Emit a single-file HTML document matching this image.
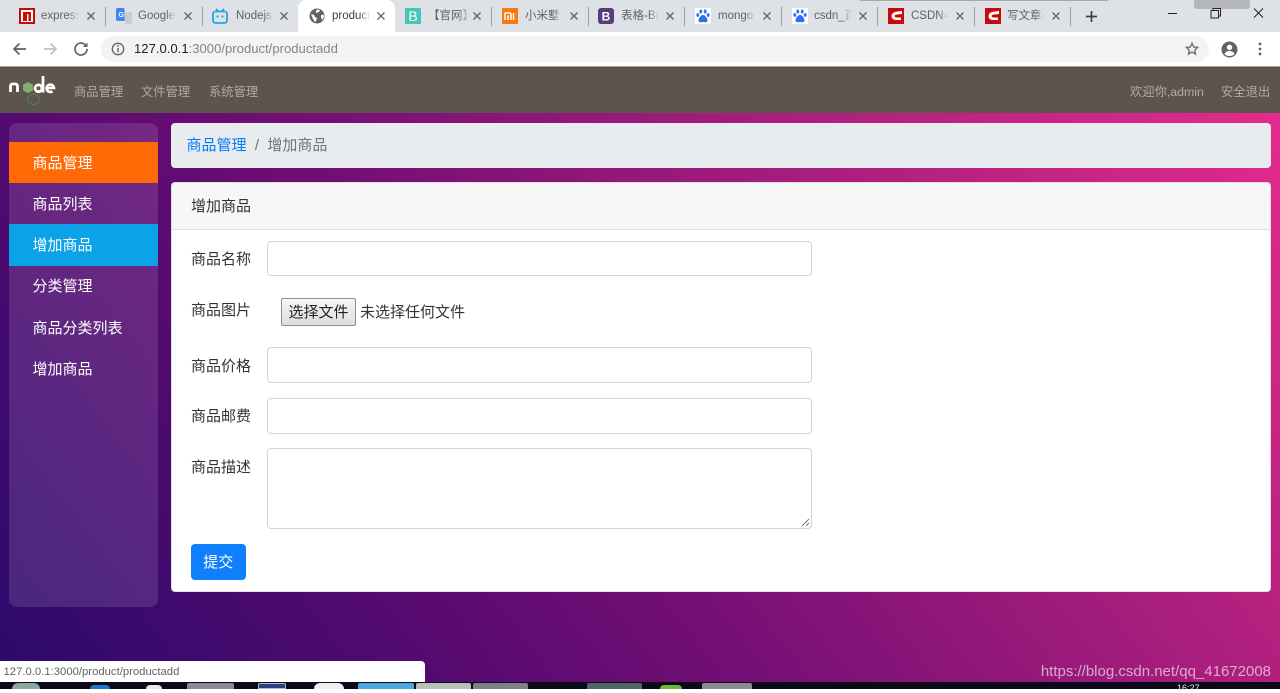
<!DOCTYPE html>
<html lang="zh-CN"><head><meta charset="utf-8"><title>product</title>
<style>
*{box-sizing:border-box}
html,body{margin:0;padding:0}
body{width:1280px;height:689px;overflow:hidden;position:relative;background:#fff;font-family:"Liberation Sans","Noto Sans CJK SC",sans-serif;color:#212529}
.a{position:absolute;white-space:nowrap}
#tabbar{left:0;top:0;width:1280px;height:32px;background:#dee1e6}
.tt{position:absolute;top:8px;font-size:11.5px;line-height:17px;color:#5f6368;width:38px;overflow:hidden;white-space:nowrap;-webkit-mask-image:linear-gradient(90deg,#000 72%,transparent);mask-image:linear-gradient(90deg,#000 72%,transparent)}
.x{position:absolute;top:11px;width:10px;height:10px}
.sep{position:absolute;top:7px;width:1px;height:19px;background:#9a9da3}
.fav{position:absolute;top:8px;width:16px;height:16px}
#bg{left:0;top:113px;width:1280px;height:569px;background:linear-gradient(52deg,#2b0a6c 0%,#540a70 26%,#6f0e74 41%,#b0207e 74%,#e42b8d 100%)}
#nav{left:0;top:66px;width:1280px;height:47px;background:#5d544e;border-top:1px solid #a8a4a0}
.nl{position:absolute;top:84px;font-size:12.3px;line-height:16px;color:rgba(255,255,255,.5)}
#side{left:9px;top:123px;width:149px;height:484px;border-radius:8px;background:rgba(255,255,255,.12)}
.m{position:absolute;left:9px;width:149px;height:41.5px;padding-left:23.5px;line-height:43px;font-size:15px;color:#fff}
#crumb{left:171px;top:123px;width:1100px;height:45px;background:#e9ecef;border-radius:4px;font-size:15px;line-height:46px;padding-left:15.5px;color:#6c757d}
#crumb span{color:#007bff}
#card{left:171px;top:182px;width:1100px;height:410px;background:#fff;border-radius:4px;border:1px solid rgba(0,0,0,.125)}
#head{left:172px;top:183px;width:1098px;height:47px;background:#f7f7f7;border-bottom:1px solid #dfdfdf;border-radius:3px 3px 0 0;font-size:15px;line-height:48px;padding-left:19px;color:#333}
.l{position:absolute;left:191px;font-size:15px;line-height:20px;color:#333}
.i{position:absolute;left:267px;width:544.5px;background:#fff;border:1px solid #ced4da;border-radius:4px}
#status{left:0;top:661px;width:425px;height:21px;background:#fff;border-radius:0 4px 0 0;font-size:11.3px;line-height:22px;padding-left:3.5px;color:#5f6368}
#task{left:0;top:682px;width:1280px;height:7px;background:#0c0a18}
.tb{position:absolute;top:683px;height:6px;border-radius:2px 2px 0 0}
</style></head><body>
<div class="a" id="tabbar">
<div style="position:absolute;left:298px;top:0;width:97px;height:32px;background:#fff;border-radius:8px 8px 0 0"></div>
<div class="sep" style="left:105px"></div><div class="sep" style="left:202px"></div><div class="sep" style="left:491px"></div><div class="sep" style="left:588px"></div><div class="sep" style="left:684px"></div><div class="sep" style="left:781px"></div><div class="sep" style="left:877px"></div><div class="sep" style="left:974px"></div><div class="sep" style="left:1070px"></div>

<svg class="fav" style="left:19px" viewBox="0 0 16 16"><rect width="16" height="16" fill="#c80a0a"/><rect x="2" y="2" width="12" height="12" fill="#fff"/><path d="M4 13V4h8v9h-2.500V6.200H8V13z" fill="#c80a0a"/></svg>
<div class="tt" style="left:41px">express</div>
<svg class="fav" style="left:116px" viewBox="0 0 16 16"><path d="M0 2a2 2 0 0 1 2-2h6l3 13H2a2 2 0 0 1-2-2z" fill="#4285f4"/><path d="M8 4h7a1 1 0 0 1 1 1v10a1 1 0 0 1-1 1H9z" fill="#c9ccd2"/><text x="2.500" y="9" font-size="7" font-weight="bold" fill="#fff" font-family="Liberation Sans">G</text></svg>
<div class="tt" style="left:138px">Google</div>
<svg class="fav" style="left:212px" viewBox="0 0 16 16"><rect x="1" y="3.500" width="14" height="11.500" rx="2.500" fill="none" stroke="#1ea7e0" stroke-width="1.800"/><path d="M4 1l2.500 2.500M12 1L9.500 3.500" stroke="#1ea7e0" stroke-width="1.600"/><circle cx="5.500" cy="8.500" r="1.100" fill="#1ea7e0"/><circle cx="10.500" cy="8.500" r="1.100" fill="#1ea7e0"/></svg>
<div class="tt" style="left:236px">Nodejs</div>
<svg class="fav" style="left:309px;top:8px" viewBox="0 0 16 16"><circle cx="8" cy="8" r="7.500" fill="#5f6368"/><path d="M2 6l3 1 1 2 2 1-1 3-1 1-2-3zM8 1.500l3 .5-1 2-3 1 0-2zM12 7l2.500-.5.500 2.500-2 3-1-3z" fill="#fff"/></svg>
<div class="tt" style="left:332px;color:#3c4043">product</div>
<div class="fav" style="left:405px;background:#48c6b8;color:#fff;font-size:14px;line-height:16px;text-align:center">B</div>
<div class="tt" style="left:428px;width:42px">【官网】</div>
<svg class="fav" style="left:502px" viewBox="0 0 16 16"><rect width="16" height="16" fill="#f57a10"/><path d="M3 12V5h4.500A1.500 1.500 0 0 1 9 6.500V12M6 12V7.500M11.500 5v7" stroke="#fff" stroke-width="1.500" fill="none"/></svg>
<div class="tt" style="left:525px">小米墅</div>
<svg class="fav" style="left:598px" viewBox="0 0 16 16"><rect width="16" height="16" rx="3" fill="#563d7c"/><text x="8" y="12.500" text-anchor="middle" font-size="12" font-weight="bold" fill="#fff" font-family="Liberation Sans">B</text></svg>
<div class="tt" style="left:621px">表格-Bo</div>
<svg class="fav" style="left:695px" viewBox="0 0 16 16"><rect width="16" height="16" fill="#fff"/><g fill="#2f6fe8"><ellipse cx="5.800" cy="3.500" rx="1.400" ry="2"/><ellipse cx="10.200" cy="3.500" rx="1.400" ry="2"/><ellipse cx="2.800" cy="7" rx="1.400" ry="1.900"/><ellipse cx="13.200" cy="7" rx="1.400" ry="1.900"/><path d="M8 7c2 0 4.500 3 4.500 5.500 0 2-2 2-4.500 1.500-2.500.5-4.500.5-4.500-1.500C3.500 10 6 7 8 7z"/></g></svg>
<div class="tt" style="left:718px">mongo</div>
<svg class="fav" style="left:792px" viewBox="0 0 16 16"><rect width="16" height="16" fill="#fff"/><g fill="#2f6fe8"><ellipse cx="5.800" cy="3.500" rx="1.400" ry="2"/><ellipse cx="10.200" cy="3.500" rx="1.400" ry="2"/><ellipse cx="2.800" cy="7" rx="1.400" ry="1.900"/><ellipse cx="13.200" cy="7" rx="1.400" ry="1.900"/><path d="M8 7c2 0 4.500 3 4.500 5.500 0 2-2 2-4.500 1.500-2.500.5-4.500.5-4.500-1.500C3.500 10 6 7 8 7z"/></g></svg>
<div class="tt" style="left:814px">csdn_百</div>
<svg class="fav" style="left:888px" viewBox="0 0 16 16"><rect width="16" height="16" fill="#c90a0a"/><path d="M14 3L8 3.800C5.500 4.200 3.500 6 3.500 8.300s2 3.700 4.500 3.700L13 12V9.500H9c-1.500 0-2.300-.5-2.300-1.400S7.500 6.700 9 6.500L14 6z" fill="#fff"/></svg>
<div class="tt" style="left:911px">CSDN-专</div>
<svg class="fav" style="left:985px" viewBox="0 0 16 16"><rect width="16" height="16" fill="#c90a0a"/><path d="M14 3L8 3.800C5.500 4.200 3.500 6 3.500 8.300s2 3.700 4.500 3.700L13 12V9.500H9c-1.500 0-2.300-.5-2.300-1.400S7.500 6.700 9 6.500L14 6z" fill="#fff"/></svg>
<div class="tt" style="left:1007px">写文章-</div>

<svg class="x" style="left:86px" viewBox="0 0 10 10"><path d="M1.500 1.500l7 7M8.500 1.500l-7 7" stroke="#5f6368" stroke-width="1.300"/></svg>
<svg class="x" style="left:183px" viewBox="0 0 10 10"><path d="M1.500 1.500l7 7M8.500 1.500l-7 7" stroke="#5f6368" stroke-width="1.300"/></svg>
<svg class="x" style="left:279px" viewBox="0 0 10 10"><path d="M1.500 1.500l7 7M8.500 1.500l-7 7" stroke="#5f6368" stroke-width="1.300"/></svg>
<svg class="x" style="left:376px" viewBox="0 0 10 10"><path d="M1.500 1.500l7 7M8.500 1.500l-7 7" stroke="#5f6368" stroke-width="1.300"/></svg>
<svg class="x" style="left:472px" viewBox="0 0 10 10"><path d="M1.500 1.500l7 7M8.500 1.500l-7 7" stroke="#5f6368" stroke-width="1.300"/></svg>
<svg class="x" style="left:569px" viewBox="0 0 10 10"><path d="M1.500 1.500l7 7M8.500 1.500l-7 7" stroke="#5f6368" stroke-width="1.300"/></svg>
<svg class="x" style="left:665px" viewBox="0 0 10 10"><path d="M1.500 1.500l7 7M8.500 1.500l-7 7" stroke="#5f6368" stroke-width="1.300"/></svg>
<svg class="x" style="left:762px" viewBox="0 0 10 10"><path d="M1.500 1.500l7 7M8.500 1.500l-7 7" stroke="#5f6368" stroke-width="1.300"/></svg>
<svg class="x" style="left:858px" viewBox="0 0 10 10"><path d="M1.500 1.500l7 7M8.500 1.500l-7 7" stroke="#5f6368" stroke-width="1.300"/></svg>
<svg class="x" style="left:955px" viewBox="0 0 10 10"><path d="M1.500 1.500l7 7M8.500 1.500l-7 7" stroke="#5f6368" stroke-width="1.300"/></svg>
<svg class="x" style="left:1051px" viewBox="0 0 10 10"><path d="M1.500 1.500l7 7M8.500 1.500l-7 7" stroke="#5f6368" stroke-width="1.300"/></svg>

<svg style="position:absolute;left:1085px;top:10px" width="13" height="13" viewBox="0 0 13 13"><path d="M6.500 1v11M1 6.500h11" stroke="#3c4043" stroke-width="1.700"/></svg>
<div style="position:absolute;left:1194px;top:0;width:56px;height:9px;background:#b4b6ba;border-radius:0 0 3px 3px"></div>
<div style="position:absolute;left:860px;top:0;width:248px;height:1px;background:#a5a7ab"></div>
<svg style="position:absolute;left:1165px;top:7px" width="110" height="12" viewBox="0 0 110 12"><path d="M3 6.500h9" stroke="#222" stroke-width="1"/><path d="M46 3.500h7.500v7.500H46zM48 3.500V1.500h7.500V9h-2" fill="none" stroke="#222" stroke-width="1"/><path d="M89 1.500l9 9M98 1.500l-9 9" stroke="#222" stroke-width="1"/></svg>
</div>

<div class="a" style="left:0;top:32px;width:1280px;height:34px;background:#fff"></div>
<svg class="a" style="left:13px;top:41px" width="80" height="16" viewBox="0 0 80 16"><path d="M1 8h12M6.500 2.500L1 8l5.500 5.500" fill="none" stroke="#5f6368" stroke-width="1.700"/><path d="M31 8h12M37.500 2.500L43 8l-5.500 5.500" fill="none" stroke="#bcbfc4" stroke-width="1.700"/><path d="M72.600 4.200A6 6 0 1 0 74 8" fill="none" stroke="#5f6368" stroke-width="1.700"/><path d="M74.500 1.500V6h-4.500z" fill="#5f6368"/></svg>
<div class="a" style="left:101px;top:36px;width:1108px;height:26px;border-radius:13px;background:#f1f3f4"></div>
<svg class="a" style="left:111px;top:42px" width="14" height="14" viewBox="0 0 14 14"><circle cx="7" cy="7" r="5.700" fill="none" stroke="#5f6368" stroke-width="1.300"/><path d="M7 6v4.300" stroke="#5f6368" stroke-width="1.400"/><circle cx="7" cy="4" r=".9" fill="#5f6368"/></svg>
<div class="a" style="left:134px;top:41px;font-size:13.1px;line-height:16px;color:#80868b"><span style="color:#202124">127.0.0.1</span>:3000/product/productadd</div>
<svg class="a" style="left:1185px;top:42px" width="14" height="14" viewBox="0 0 14 14"><path d="M7 1.300l1.700 3.700 4 .4-3 2.700.9 4L7 10l-3.600 2.100.9-4-3-2.700 4-.4z" fill="none" stroke="#5f6368" stroke-width="1.200"/></svg>
<svg class="a" style="left:1221px;top:41px" width="17" height="17" viewBox="0 0 17 17"><circle cx="8.500" cy="8.500" r="8" fill="#5f6368"/><circle cx="8.500" cy="6.300" r="2.700" fill="#fff"/><path d="M3.500 13c1-2.300 3-3 5-3s4 .7 5 3c-1.200 1.300-3 2-5 2s-3.800-.7-5-2z" fill="#fff"/></svg>
<svg class="a" style="left:1257px;top:42px" width="6" height="14" viewBox="0 0 6 14"><circle cx="3" cy="2" r="1.400" fill="#5f6368"/><circle cx="3" cy="7" r="1.400" fill="#5f6368"/><circle cx="3" cy="12" r="1.400" fill="#5f6368"/></svg>

<div class="a" id="bg"></div>
<div class="a" id="nav"></div>
<svg class="a" style="left:8px;top:75px" width="50" height="30" viewBox="0 0 50 30"><path d="M2.500 17.500V11.500a2 2 0 0 1 2-2h3a2 2 0 0 1 2 2v6" fill="none" stroke="#fff" stroke-width="2.800" transform="translate(0 -.5)"/><path d="M20 7l5 2.800v5.600L20 18.200l-5-2.800V9.800z" fill="#7fb069"/><circle cx="30.500" cy="13.300" r="3.400" fill="none" stroke="#fff" stroke-width="2.800"/><path d="M35 1v16.500" stroke="#fff" stroke-width="2.800"/><path d="M38.500 13h7.500a3.700 3.700 0 1 0-1.500 3.300" fill="none" stroke="#fff" stroke-width="2.600"/><path d="M25.500 18.500l5.500 3v5.500l-5.500 3-5.500-3v-5.500z" fill="none" stroke="#4a8a3c" stroke-width="1"/></svg>
<div class="nl" style="left:74px">商品管理</div>
<div class="nl" style="left:141px">文件管理</div>
<div class="nl" style="left:209px">系统管理</div>
<div class="nl" style="left:1130px">欢迎你,admin</div>
<div class="nl" style="left:1221px">安全退出</div>

<div class="a" id="side"></div>
<div class="m" style="top:141.500px;background:#ff6a06">商品管理</div>
<div class="m" style="top:183px">商品列表</div>
<div class="m" style="top:224px;background:#0aa3e8">增加商品</div>
<div class="m" style="top:265px">分类管理</div>
<div class="m" style="top:306.500px">商品分类列表</div>
<div class="m" style="top:348px">增加商品</div>

<div class="a" id="crumb"><span>商品管理</span>&nbsp; /&nbsp; 增加商品</div>
<div class="a" id="card"></div>
<div class="a" id="head">增加商品</div>

<div class="l" style="top:250px">商品名称</div>
<div class="i" style="top:241px;height:35px"></div>
<div class="l" style="top:301px">商品图片</div>
<div class="a" style="left:281px;top:298px;width:75px;height:28px;background:linear-gradient(#f6f6f6,#dedede);border:1px solid #8f8f8f;border-radius:2px;font-size:15px;line-height:28px;text-align:center;color:#222">选择文件</div>
<div class="a" style="left:360px;top:303px;font-size:15px;line-height:20px;color:#333">未选择任何文件</div>
<div class="l" style="top:357px">商品价格</div>
<div class="i" style="top:347px;height:36px"></div>
<div class="l" style="top:407px">商品邮费</div>
<div class="i" style="top:398px;height:36px"></div>
<div class="l" style="top:458px">商品描述</div>
<div class="i" style="top:448px;height:81px"></div>
<svg class="a" style="left:801px;top:518px" width="9" height="9" viewBox="0 0 9 9"><path d="M1 8l7-7M5 8l3-3" stroke="#777" stroke-width="1"/></svg>
<div class="a" style="left:191px;top:544px;width:54.500px;height:36px;background:#0f80fb;border-radius:4px;color:#fff;font-size:15px;line-height:37px;text-align:center">提交</div>

<div class="a" id="status">127.0.0.1:3000/product/productadd</div>
<div class="a" style="right:9px;top:663px;font-size:15px;line-height:18px;color:rgba(255,255,255,.62)">https://blog.csdn.net/qq_41672008</div>
<div class="a" id="task"></div>
<div class="tb" style="left:12px;width:28px;background:#8ea6a0;border-radius:14px 14px 0 0"></div>
<div class="tb" style="left:90px;width:20px;top:685px;height:4px;background:#1b78c8;border-radius:10px 10px 0 0"></div>
<div class="tb" style="left:146px;width:16px;top:685px;height:4px;background:#e8e8e8;border-radius:8px 8px 0 0"></div>
<div class="tb" style="left:187px;width:47px;background:#8c8a90"></div>
<div class="tb" style="left:258px;width:28px;background:#2b3f7a;border:1px solid #a9b9e0"></div>
<div class="tb" style="left:314px;width:30px;background:#f0f0f0;border-radius:8px 8px 0 0"></div>
<div class="tb" style="left:358px;width:56px;background:#4aa9df"></div>
<div class="tb" style="left:416px;width:55px;background:#b9c0b9"></div>
<div class="tb" style="left:473px;width:55px;background:#7f8088"></div>
<div class="tb" style="left:587px;width:55px;background:#50666a"></div>
<div class="tb" style="left:660px;width:22px;top:685px;height:4px;background:#6fb636;border-radius:10px 10px 0 0"></div>
<div class="tb" style="left:702px;width:50px;background:#8c8a90"></div>
<div class="a" style="left:1177px;top:684px;font-size:9px;line-height:9px;color:#eee">16:27</div>
</body></html>
